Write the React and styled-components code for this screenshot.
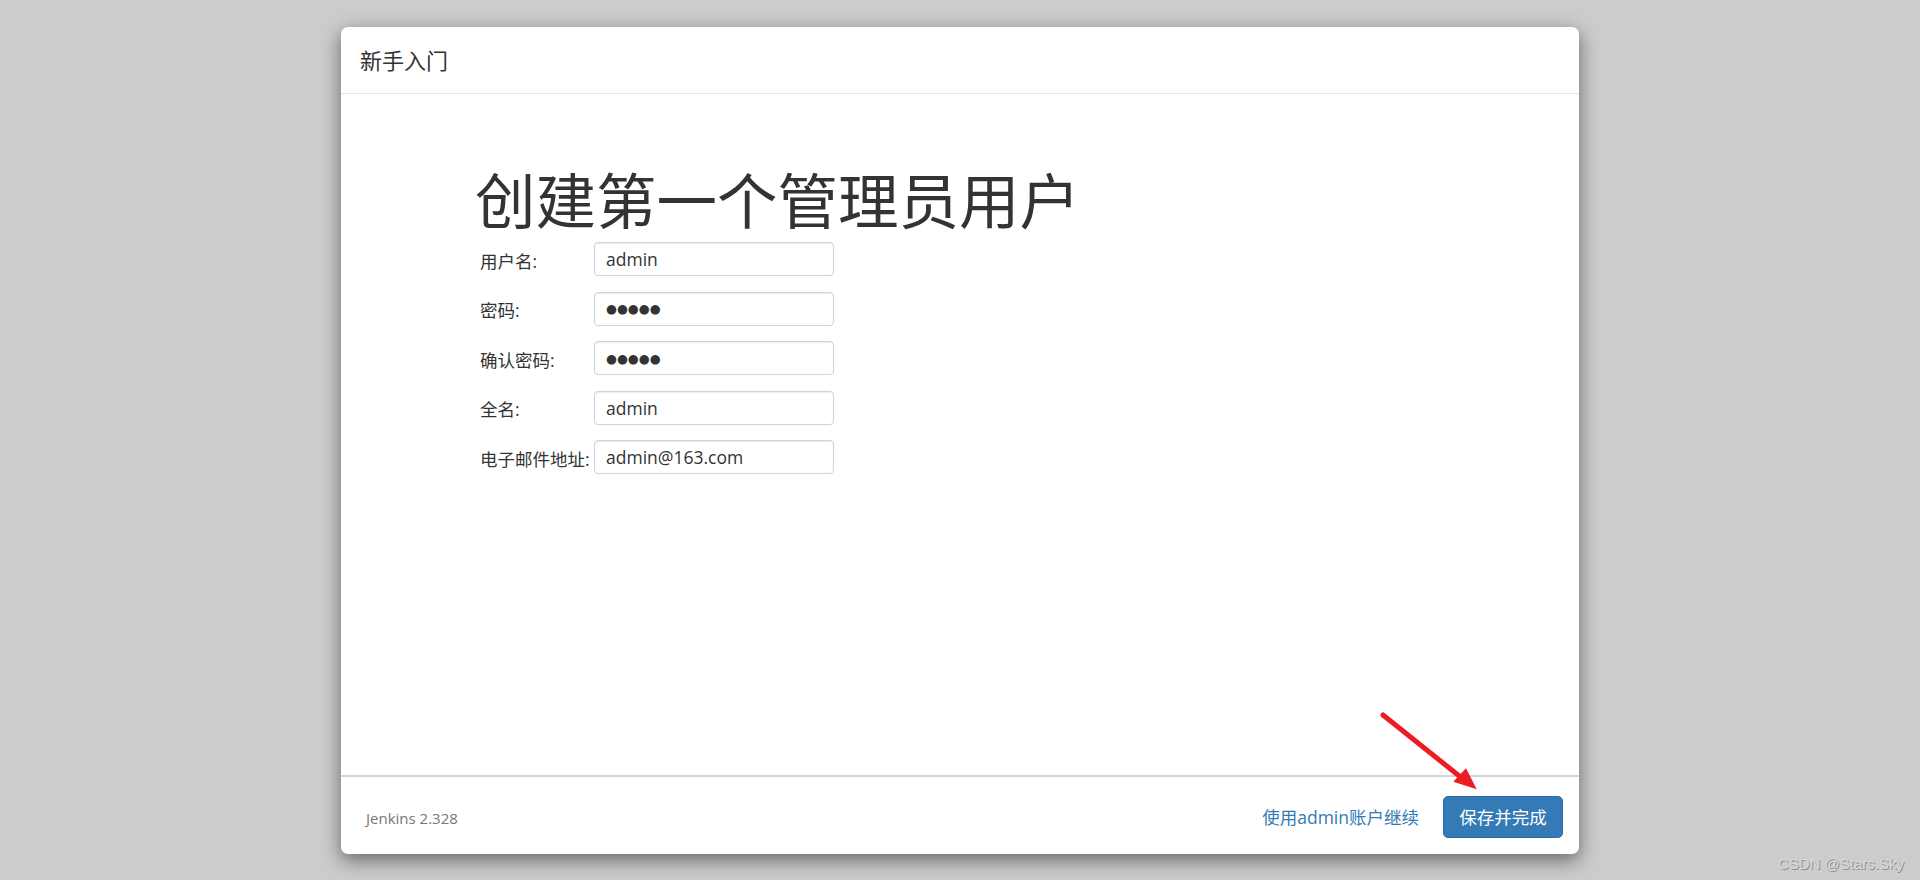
import React from "react";
import styled, { createGlobalStyle } from "styled-components";

const GlobalStyle = createGlobalStyle`
  html, body {
    margin: 0;
    padding: 0;
    background: #cccccc;
    height: 880px;
    overflow: hidden;
  }
  * { box-sizing: border-box; }
`;

const cjk = `"Open Sans", "Noto Sans CJK SC", sans-serif`;

const Page = styled.div`
  position: relative;
  height: 880px;
  padding-top: 27px;
  display: flex;
  justify-content: center;
  font-family: ${cjk};
  color: #333;
`;

const Dialog = styled.div`
  position: relative;
  width: 1238px;
  height: 827px;
  background: #fff;
  border-radius: 7px;
  box-shadow: 0 6px 19px rgba(0, 0, 0, 0.5);
  display: flex;
  flex-direction: column;
`;

const Header = styled.div`
  height: 67px;
  padding: 0 19px;
  display: flex;
  align-items: center;
  border-bottom: 1px solid #e5e5e5;
  font-size: 22px;
  line-height: 1;
  color: #333;
`;

const Body = styled.div`
  flex: 1;
  padding: 77px 0 0 134px;
`;

const Title = styled.h1`
  margin: 0 0 11px;
  font-size: 60.5px;
  line-height: 60px;
  font-weight: 400;
  color: #333;
`;

const Form = styled.div`
  display: grid;
  grid-template-columns: 114px 240px;
  grid-auto-rows: 34px;
  row-gap: 15.5px;
  margin-left: 5px;
`;

const Label = styled.label`
  font-size: 17.5px;
  line-height: 1;
  align-self: center;
  padding-top: 5px;
  color: #333;
  white-space: nowrap;
`;

const Input = styled.input`
  width: 240px;
  height: 34px;
  padding: 0 11px;
  border: 1px solid #d2d2d2;
  border-radius: 4px;
  box-shadow: inset 0 1px 1px rgba(0, 0, 0, 0.075);
  font-family: ${(p) => (p.$masked ? `"DejaVu Sans", sans-serif` : cjk)};
  font-size: ${(p) => (p.$masked ? "12.5px" : "17.5px")};
  color: #333;
  background: #fff;
  outline: none;
`;

const Footer = styled.div`
  height: 79px;
  border-top: 2px solid #d4d4d4;
  padding: 2px 16px 0 25px;
  display: flex;
  align-items: center;
  justify-content: space-between;
`;

const Version = styled.span`
  font-size: 15px;
  color: #777;
  padding-top: 3px;
`;

const Actions = styled.div`
  display: flex;
  align-items: center;
  gap: 24px;
`;

const Link = styled.a`
  font-size: 17.5px;
  color: #337ab7;
  text-decoration: none;
  cursor: pointer;
`;

const PrimaryBtn = styled.button`
  width: 120px;
  height: 42px;
  background: #337ab7;
  border: 1px solid #2e6da4;
  border-radius: 5px;
  color: #fff;
  font-family: ${cjk};
  font-size: 17.5px;
  cursor: pointer;
`;

const Arrow = styled.svg`
  position: absolute;
  left: 1030px;
  top: 678px;
  overflow: visible;
  pointer-events: none;
`;

const Watermark = styled.div`
  position: absolute;
  right: 16px;
  bottom: 8px;
  font-family: "Liberation Sans", Arial, sans-serif;
  font-size: 15px;
  line-height: 17px;
  color: #d9d9d9;
  text-shadow: 1px 1px 0 #8e8e8e;
`;

const fields = [
  { label: "用户名:", value: "admin" },
  { label: "密码:", value: "●●●●●", masked: true },
  { label: "确认密码:", value: "●●●●●", masked: true },
  { label: "全名:", value: "admin" },
  { label: "电子邮件地址:", value: "admin@163.com" },
];

export default function App() {
  return (
    <>
      <GlobalStyle />
      <Page>
        <Dialog>
          <Header>新手入门</Header>
          <Body>
            <Title>创建第一个管理员用户</Title>
            <Form>
              {fields.map((f) => (
                <React.Fragment key={f.label}>
                  <Label>{f.label}</Label>
                  <Input type="text" $masked={f.masked} defaultValue={f.value} readOnly />
                </React.Fragment>
              ))}
            </Form>
          </Body>
          <Footer>
            <Version>Jenkins 2.328</Version>
            <Actions>
              <Link>使用admin账户继续</Link>
              <PrimaryBtn>保存并完成</PrimaryBtn>
            </Actions>
          </Footer>
          <Arrow width="110" height="90" viewBox="0 0 110 90">
            <line x1="12" y1="10" x2="92" y2="74" stroke="#ed1c24" strokeWidth="5" strokeLinecap="round" />
            <polygon points="105.7,84.3 82.3,76.7 95,63.3" fill="#ed1c24" />
          </Arrow>
        </Dialog>
        <Watermark>CSDN @Stars.Sky</Watermark>
      </Page>
    </>
  );
}
